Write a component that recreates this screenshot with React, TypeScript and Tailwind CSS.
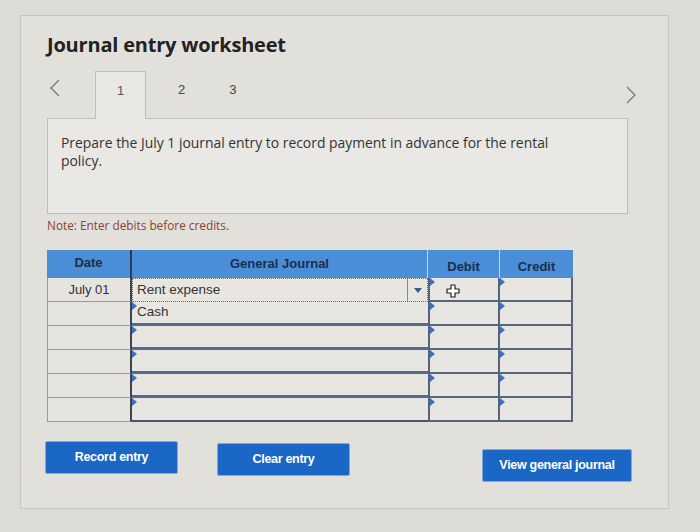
import React from 'react';

const rows = [
  { date: 'July 01', account: 'Rent expense' },
  { date: '', account: 'Cash' },
  { date: '', account: '' },
  { date: '', account: '' },
  { date: '', account: '' },
  { date: '', account: '' },
];

function Marker() {
  return (
    <span className="absolute left-0 top-0 h-0 w-0 border-y-[4px] border-l-[5px] border-y-transparent border-l-[#3b6fc4]" />
  );
}

function Chevron({ dir }: { dir: 'left' | 'right' }) {
  return (
    <svg width="10" height="18" viewBox="0 0 10 18" className="text-[#7a7a7a]">
      <polyline
        points={dir === 'left' ? '9,1 1,9 9,17' : '1,1 9,9 1,17'}
        fill="none"
        stroke="currentColor"
        strokeWidth="1.4"
      />
    </svg>
  );
}

function MoveCursor() {
  return (
    <svg width="14" height="14" viewBox="0 0 14 14" className="absolute left-[16px] top-[6px]">
      <path
        d="M5 1h4v4h4v4H9v4H5V9H1V5h4z"
        fill="#ffffff"
        stroke="#222222"
        strokeWidth="1.2"
        strokeLinejoin="round"
      />
    </svg>
  );
}

export default function App() {
  return (
    <div className="w-[700px] h-[532px] overflow-hidden bg-[#dddbd6] pt-[15px] pl-[20px]">
      <div className="w-[649px] h-[494px] bg-[#e2e0db] border border-[#c6c4bf] pl-[26px] pt-[14px] font-['Open_Sans',sans-serif]">
        <h1 className="text-[20px] leading-[30px] font-bold text-[#222] tracking-[-0.2px]">
          Journal entry worksheet
        </h1>

        {/* tabs */}
        <div className="mt-[10px] flex items-end w-[581px] h-[48px]">
          <div className="w-[48px] h-[48px] flex items-start pt-[9px] pl-[3px]">
            <Chevron dir="left" />
          </div>
          <div className="relative z-10 w-[51px] h-[48px] -mb-px bg-[#e9e8e4] border-x border-t border-[#bebdb9] flex items-start justify-center pt-[9px] text-[13px] text-[#555] font-['Liberation_Sans',sans-serif]">
            1
          </div>
          <div className="h-[48px] pt-[10px] pl-[32px] text-[13px] text-[#444] font-['Liberation_Sans',sans-serif]">2</div>
          <div className="h-[48px] pt-[10px] pl-[44px] text-[13px] text-[#444] font-['Liberation_Sans',sans-serif]">3</div>
          <div className="ml-auto h-[48px] pt-[16px] -mr-[8px]">
            <Chevron dir="right" />
          </div>
        </div>

        {/* prompt */}
        <div className="w-[581px] h-[96px] bg-[#e9e8e4] border border-[#bebdb9] px-[13px] pt-[15px] text-[13.9px] leading-[18px] text-[#333]">
          Prepare the July 1 journal entry to record payment in advance for the rental
          <br />
          policy.
        </div>

        <p className="mt-[3px] text-[11.8px] leading-[16px] text-[#8c3f33]">
          Note: Enter debits before credits.
        </p>

        {/* table */}
        <div className="mt-[17px] w-[526px] font-['Liberation_Sans',sans-serif]">
          <div className="flex h-[28px] bg-[#4a8ed7] text-[13px] font-bold text-[#1d2d4c]">
            <div className="w-[85px] flex items-center justify-center border-r-2 border-[#2b3b5c] pb-[2px]">Date</div>
            <div className="w-[296px] flex items-center justify-center border-r border-[#c7d4e6]">General Journal</div>
            <div className="w-[72px] flex items-center justify-center border-r border-[#c7d4e6] pt-[6px]">Debit</div>
            <div className="w-[73px] flex items-center justify-center pt-[6px]">Credit</div>
          </div>
          {rows.map((r, i) => (
            <div key={i} className="flex h-[24px]">
              <div className="w-[85px] flex items-center justify-center bg-[#e6e4df] border-b border-l border-[#9c9a96] border-r-2 border-r-[#3d4450] text-[13px] text-[#333]">
                {r.date}
              </div>
              {i === 0 ? (
                <div className="relative w-[296px] flex items-center bg-[#e8e6e1] border border-dotted border-[#5b6d8f] pl-[4px] text-[13.5px] text-[#333]">
                  {r.account}
                  <div className="ml-auto h-full w-[20px] border-l border-[#8a8a8a] flex items-center justify-center">
                    <span className="h-0 w-0 border-x-[4px] border-t-[5px] border-x-transparent border-t-[#3a5a8c]" />
                  </div>
                </div>
              ) : (
                <div className={`relative w-[296px] flex items-center bg-[#e8e6e1] pl-[5px] text-[13.5px] text-[#333] ${i === rows.length - 1 ? 'border-b-2 border-[#4a5568]' : 'border-b-[3px] border-[#566a8c]'}`}>
                  <Marker />
                  {r.account}
                </div>
              )}
              <div className="relative w-[72px] bg-[#e8e6e1] border-2 border-t-0 border-[#56657c]">
                <Marker />
                {i === 0 && <MoveCursor />}
              </div>
              <div className="relative w-[73px] bg-[#e8e6e1] border-2 border-t-0 border-l-0 border-[#56657c]">
                <Marker />
              </div>
            </div>
          ))}
        </div>

        {/* buttons */}
        <div className="mt-[19px] flex items-start font-['Liberation_Sans',sans-serif] text-[12.5px] font-bold text-white tracking-[-0.3px]">
          <button className="w-[133px] h-[33px] bg-[#1a67c5] border border-[#7fa8dc] rounded-[2px] -ml-[2px]">
            Record entry
          </button>
          <button className="ml-[39px] mt-[2px] w-[133px] h-[33px] bg-[#1a67c5] border border-[#7fa8dc] rounded-[2px]">
            Clear entry
          </button>
          <button className="ml-[132px] mt-[8px] w-[150px] h-[33px] bg-[#1a67c5] border border-[#7fa8dc] rounded-[2px]">
            View general journal
          </button>
        </div>
      </div>
    </div>
  );
}
